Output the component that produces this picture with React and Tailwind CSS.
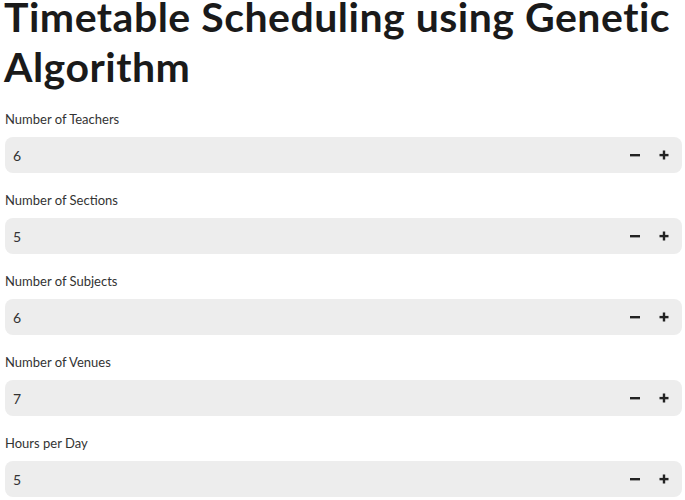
import React from "react";

const fields = [
  ["Number of Teachers", "6"],
  ["Number of Sections", "5"],
  ["Number of Subjects", "6"],
  ["Number of Venues", "7"],
  ["Hours per Day", "5"],
];

function Minus() {
  return (
    <svg width="12" height="12" viewBox="0 0 12 12">
      <rect x="1" y="5" width="10" height="2.4" fill="#222" />
    </svg>
  );
}
function Plus() {
  return (
    <svg width="12" height="12" viewBox="0 0 12 12">
      <rect x="1.5" y="4.9" width="9" height="2.4" fill="#222" />
      <rect x="4.8" y="1.5" width="2.4" height="9" fill="#222" />
    </svg>
  );
}

export default function App() {
  return (
    <div
      className="w-[685px] h-[500px] overflow-hidden bg-white text-[#31333f]"
      style={{ fontFamily: '"Lato", "Noto Sans", sans-serif' }}
    >
      <h1 className="pl-[4px] text-[41px] font-bold text-[#1a1a1a] tracking-[0.5px] whitespace-nowrap">
        <span className="block leading-[34px]">Timetable Scheduling using Genetic</span>
        <span className="block mt-[8px] leading-[49px]">Algorithm</span>
      </h1>
      <div className="mt-[19px] pl-[5px] pr-[3px]">
        {fields.map(([label, value]) => (
          <div key={label} className="mb-[18px]">
            <div className="h-[20px] flex items-center text-[13px] text-[#333]">{label}</div>
            <div className="mt-[7px] h-[36px] rounded-[8px] bg-[#ededed] flex items-center">
              <div className="flex-1 pl-[8px] text-[14px] text-[#333]">{value}</div>
              <div className="w-[29px] flex justify-center"><Minus /></div>
              <div className="w-[29px] mr-[4px] flex justify-center"><Plus /></div>
            </div>
          </div>
        ))}
      </div>
    </div>
  );
}
